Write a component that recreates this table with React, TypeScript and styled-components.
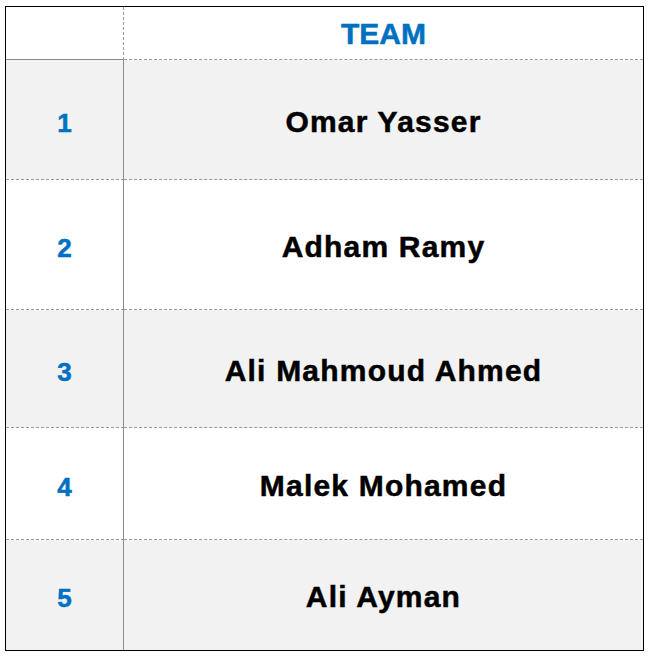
import React from "react";
import styled, { createGlobalStyle } from "styled-components";

const Global = createGlobalStyle`
  html, body { margin: 0; padding: 0; background: #ffffff; }
  body { font-family: "Liberation Sans", Arial, sans-serif; }
`;

const Page = styled.div`
  padding: 6px 0 0 5px;
`;

const Table = styled.div`
  width: 639px;
  box-sizing: border-box;
  border: 1px solid #000;
  display: grid;
  grid-template-columns: 118px 519px;
`;

const Cell = styled.div<{ $h: number; $shade?: boolean; $last?: boolean; $left?: boolean; $solidBottom?: boolean; $dashRight?: boolean }>`
  box-sizing: border-box;
  height: ${(p) => p.$h}px;
  background: ${(p) => (p.$shade ? "#f2f2f2" : "#ffffff")};
  border-bottom: ${(p) => (p.$last ? "none" : p.$solidBottom ? "1px solid #8a8a8a" : "1px dashed #9a9a9a")};
  border-right: ${(p) => (p.$left ? (p.$dashRight ? "1px dashed #9a9a9a" : "1px solid #8a8a8a") : "none")};
  display: flex;
  align-items: center;
  justify-content: center;
  font-weight: 700;
`;

const HeaderText = styled.span`
  color: #0070c0;
  font-size: 30px;
  line-height: 1;
  padding-top: 2px;
  -webkit-text-stroke: 0.5px currentColor;
`;

const Num = styled.span`
  color: #0070c0;
  font-size: 26px;
  line-height: 1;
  padding-top: 6px;
  -webkit-text-stroke: 0.5px currentColor;
`;

const Name = styled.span`
  color: #000;
  font-size: 30px;
  line-height: 1;
  padding-top: 4px;
  letter-spacing: 1.2px;
  -webkit-text-stroke: 0.5px currentColor;
`;

const rows = [
  { n: 1, name: "Omar Yasser", h: 120 },
  { n: 2, name: "Adham Ramy", h: 130 },
  { n: 3, name: "Ali Mahmoud Ahmed", h: 118 },
  { n: 4, name: "Malek Mohamed", h: 112 },
  { n: 5, name: "Ali Ayman", h: 110 },
];

export default function App() {
  return (
    <>
      <Global />
      <Page>
        <Table>
          <Cell $h={53} $left $dashRight $solidBottom />
          <Cell $h={53}>
            <HeaderText>TEAM</HeaderText>
          </Cell>
          {rows.map((r, i) => {
            const shade = i % 2 === 0;
            const last = i === rows.length - 1;
            return (
              <React.Fragment key={r.n}>
                <Cell $h={r.h} $shade={shade} $last={last} $left>
                  <Num>{r.n}</Num>
                </Cell>
                <Cell $h={r.h} $shade={shade} $last={last}>
                  <Name>{r.name}</Name>
                </Cell>
              </React.Fragment>
            );
          })}
        </Table>
      </Page>
    </>
  );
}
